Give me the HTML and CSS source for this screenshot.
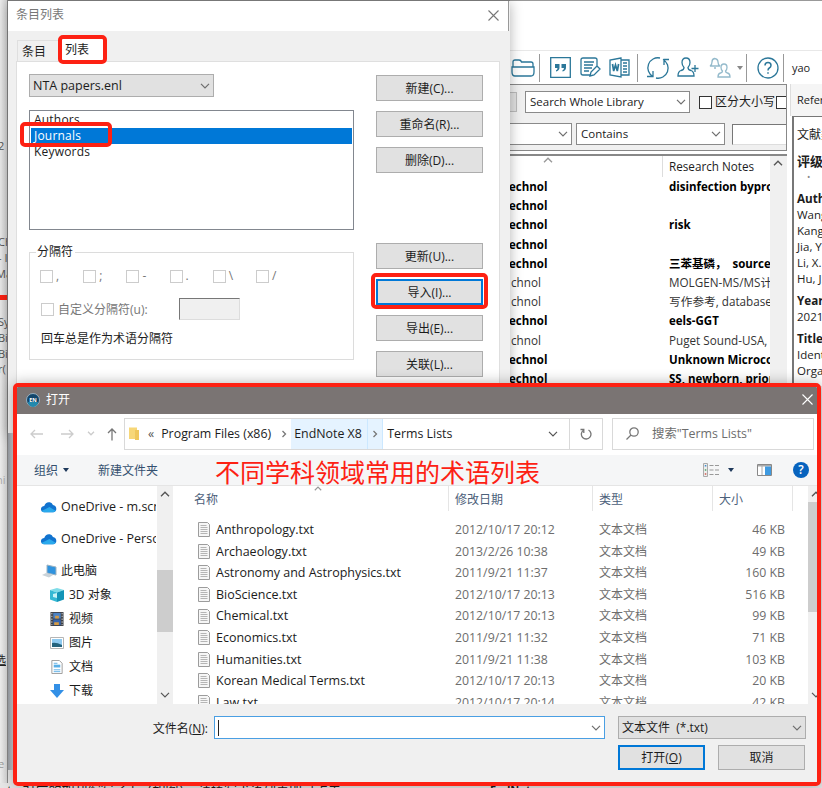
FILE: index.html
```html
<!DOCTYPE html>
<html lang="zh-CN">
<head>
    <meta charset="UTF-8">
    <meta name="viewport" content="width=device-width, initial-scale=1.0">
    <title>条目列表</title>
    <link rel="stylesheet" href="styles.css">
</head>
<body>
<svg class="defs" width="0" height="0">
    <symbol id="down" viewBox="0 0 10 6"><path d="M1 .8l4 4 4-4" fill="none" stroke="currentColor" stroke-width="1.2"/></symbol>
    <symbol id="up" viewBox="0 0 10 6"><path d="M1 5.2l4-4 4 4" fill="none" stroke="currentColor" stroke-width="1.4"/></symbol>
    <symbol id="close" viewBox="0 0 11 11"><path d="M.5.5l10 10M10.5.5l-10 10" fill="none" stroke="currentColor" stroke-width="1.1"/></symbol>
    <symbol id="cloud" viewBox="0 0 18 12">
        <path d="M1 8.5C1 6 3 5 4.500 5 5.300 1.800 8 .5 10.400 1.100c1.800.4 2.800 1.700 3.300 2.900C16 4.300 17.300 6 17.300 8c0 2-1.500 3.500-3.300 3.500H4C2.200 11.500 1 10.200 1 8.500z" fill="#1173cf"/>
        <path d="M1.600 10.300l8.400-4.200 6.600 4c-.6.900-1.600 1.400-2.600 1.400H4c-1 0-1.800-.4-2.400-1.200z" fill="#2aa9ec"/>
    </symbol>
    <symbol id="txt" viewBox="0 0 12 15">
        <path d="M.5.500h9l2 2v12H.5z" fill="#f6f6f6" stroke="#9c9c9c"/>
        <path d="M2.500 3.500h6M2.500 5.500h7M2.500 7.500h7M2.500 9.500h7M2.500 11.500h7" stroke="#b5b5b5"/>
    </symbol>
</svg>
<div class="desktop">
    <!-- document behind everything -->
    <div class="doc-strip">
        <span class="s1">2</span><span class="s2">Ch</span><span class="s3">- I</span><span class="s4">Ma</span>
        <i class="red-mark"></i>
        <span class="s5">Sy</span><span class="s6">Bi</span><span class="s7">Bi</span><span class="s8">r(</span>
        <span class="s9">ni</span><span class="s10">选</span><span class="s11">e</span>
    </div>
    <div class="doc-bottom"><span>ete 对应的期刊缩写了下（如图），请填写术语列表即可点击</span><b>EndNote</b></div>

    <!-- EndNote library -->
    <div class="library">
        <div class="lib-toolbar">
            <svg class="ic folder" viewBox="0 0 24 18"><path d="M2 8V3q0-2 2-2h4q2 0 2.500 2H20q2 0 2 2v3M1 8h22v5q0 4-3 4H4q-3 0-3-4z"/></svg>
            <i class="sep"></i>
            <svg class="ic quote" viewBox="0 0 21 21"><path d="M.7.700h19.600v19.600H.7z"/><path class="fill" d="M5 7h4.500v3.500q0 3-3.500 4v-1.200q1.500-.6 1.500-2.300H5zM11.500 7H16v3.500q0 3-3.500 4v-1.200q1.500-.6 1.500-2.300h-2.500z"/></svg>
            <svg class="ic note" viewBox="0 0 21 21"><path d="M17 9V3q0-2-2-2H3Q1 1 1 3v13q0 2 2 2h7M4 5h10M4 8h9M4 11h8M4 14h5M10 19l1-4 6-6 3 3-6 6z"/></svg>
            <svg class="ic word" viewBox="0 0 21 21"><path d="M12 1L1 3v15l11 2zM12 3h8v15h-8M14 6h4M14 9h4M14 12h4M14 15h4"/><path d="M3.500 7l1.200 7L6.500 8l1.800 6 1.300-7" stroke-width="1.700"/></svg>
            <i class="sep"></i>
            <svg class="ic sync" viewBox="0 0 24 24"><path d="M7 20.500A10 10 0 0 1 14 2M17 3.500A10 10 0 0 1 10 22M18 9V3.500h5M7 15v5.500H1"/></svg>
            <svg class="ic user" viewBox="0 0 22 21"><path d="M9 1q4 0 4 4.500 0 3-2 5 0 2.500 3 3 3 1 3 5.500H1q0-4.500 3-5.500 3-.5 3-3-2-2-2-5Q5 1 9 1zM18 8v7M14.500 11.500h7"/></svg>
            <svg class="ic bell" viewBox="0 0 22 21"><path d="M1 9q2-1 2-4 0-3 2.500-3.500Q9 2 9 5q0 3 2 4zM5 11h2M15 7q3 0 3 3.500 0 2-1.500 3.500 0 1.500 2 2 2.500.5 2.500 4H9q0-3.500 2.500-4 2-.5 2-2-1.500-1.500-1.500-3.500Q12 7 15 7z"/></svg>
            <i class="caret"></i>
            <i class="sep"></i>
            <svg class="ic help" viewBox="0 0 22 22"><circle cx="11" cy="11" r="10"/><path d="M8 8.500Q8 5.500 11 5.500t3 2.800Q14 10 12.300 11 11 11.800 11 13.500M11 15.200v1.600" stroke-width="1.500"/></svg>
            <i class="sep"></i>
            <span class="yao">yao</span>
        </div>
        <div class="lib-body">
            <div class="lib-main">
                <div class="search">
                    <div class="search-row">
                        <i class="stub"></i>
                        <div class="combo scope"><span>Search Whole Library</span><svg class="chev"><use href="#down"/></svg></div>
                        <i class="box dark"></i><span class="case">区分大小写</span><i class="box dark"></i>
                    </div>
                    <div class="search-row second">
                        <div class="combo field"><span></span><svg class="chev"><use href="#down"/></svg></div>
                        <div class="combo op"><span>Contains</span><svg class="chev"><use href="#down"/></svg></div>
                        <i class="term"></i>
                    </div>
                </div>
                <div class="refs">
                    <div class="ref-table">
                        <div class="ref-head"><span class="sort"><svg class="chev"><use href="#up"/></svg></span><span class="notes">Research Notes</span></div>
                        <div class="ref unread"><span>echnol</span><span>disinfection byproducts</span></div>
                        <div class="ref unread"><span>echnol</span><span></span></div>
                        <div class="ref unread"><span>echnol</span><span>risk</span></div>
                        <div class="ref unread"><span>echnol</span><span></span></div>
                        <div class="ref unread"><span>echnol</span><span>三苯基磷，&nbsp; source</span></div>
                        <div class="ref"><span>chnol</span><span>MOLGEN-MS/MS计算</span></div>
                        <div class="ref"><span>chnol</span><span>写作参考, database</span></div>
                        <div class="ref unread"><span>echnol</span><span>eels-GGT</span></div>
                        <div class="ref"><span>chnol</span><span>Puget Sound-USA,</span></div>
                        <div class="ref unread"><span>echnol</span><span>Unknown Microcontam</span></div>
                        <div class="ref unread"><span>echnol</span><span>SS, newborn, priority</span></div>
                    </div>
                    <div class="ref-scroll"><svg class="chev"><use href="#up"/></svg></div>
                </div>
            </div>
            <div class="detail">
                <div class="detail-tab">Reference</div>
                <div class="detail-body">
                    <p class="kind">文献类型</p>
                    <p class="rating">评级</p>
                    <p class="dot">•</p>
                    <h4>Author</h4>
                    <p>Wang,</p><p>Kang,</p><p>Jia, Y.</p><p>Li, X.</p><p>Hu, J.</p>
                    <h4>Year</h4>
                    <p>2021</p>
                    <h4>Title</h4>
                    <p>Identif</p><p>Organic</p>
                </div>
            </div>
        </div>
    </div>

    <!-- term lists window -->
    <div class="terms">
        <div class="terms-title"><span>条目列表</span><svg class="close"><use href="#close"/></svg></div>
        <div class="terms-body">
            <div class="tabs"><span class="tab">条目</span><span class="tab active">列表</span></div>
            <div class="page">
                <div class="page-left">
                    <div class="combo gray lib-name"><span>NTA papers.enl</span><svg class="chev"><use href="#down"/></svg></div>
                    <ul class="lists">
                        <li>Authors</li>
                        <li class="selected">Journals</li>
                        <li>Keywords</li>
                    </ul>
                    <fieldset class="delims">
                        <legend>分隔符</legend>
                        <div class="checks">
                            <label><i class="box"></i>,</label>
                            <label><i class="box"></i>;</label>
                            <label><i class="box"></i>-</label>
                            <label><i class="box"></i>.</label>
                            <label><i class="box"></i>\</label>
                            <label><i class="box"></i>/</label>
                        </div>
                        <div class="custom"><i class="box"></i><span>自定义分隔符(u):</span><i class="custom-input"></i></div>
                        <p>回车总是作为术语分隔符</p>
                    </fieldset>
                </div>
                <div class="page-right">
                    <button>新建(C)...</button>
                    <button>重命名(R)...</button>
                    <button>删除(D)...</button>
                    <button class="gap">更新(U)...</button>
                    <button class="focus">导入(I)...</button>
                    <button>导出(E)...</button>
                    <button>关联(L)...</button>
                </div>
            </div>
        </div>
    </div>
    <div class="back-edge"></div>

    <!-- open file dialog -->
    <div class="dialog">
        <div class="dlg-title">
            <svg class="logo" viewBox="0 0 14 14"><circle cx="7" cy="7" r="6.500" fill="#12466b" stroke="#a8c4d6" stroke-width=".8"/><path d="M2 9a5 5 0 0 0 10 0z" fill="#2389ad"/><text x="7" y="9" text-anchor="middle">EN</text></svg>
            <span>打开</span>
            <svg class="close"><use href="#close"/></svg>
        </div>
        <div class="nav">
            <svg class="arrow dim" viewBox="0 0 13 10"><path d="M5 1L1 5l4 4M1 5h12"/></svg>
            <svg class="arrow dim fwd" viewBox="0 0 13 10"><path d="M8 1l4 4-4 4M12 5H0"/></svg>
            <svg class="recent" viewBox="0 0 8 5"><path d="M1 .8l3 3 3-3"/></svg>
            <svg class="parent" viewBox="0 0 10 13"><path d="M1 5l4-4 4 4M5 1v11.500"/></svg>
            <div class="address">
                <svg class="dir" viewBox="0 0 10 13"><path d="M0 .5h8V12H0z"/><path d="M6 3h4v10H6z"/></svg>
                <span class="more">«</span>
                <span class="crumb pf">Program Files (x86)</span>
                <span class="to"><svg viewBox="0 0 6 8"><path d="M1.500 1l3 3-3 3"/></svg></span>
                <span class="crumb hot">EndNote X8</span>
                <span class="to hot"><svg viewBox="0 0 6 8"><path d="M1.500 1l3 3-3 3"/></svg></span>
                <span class="crumb last">Terms Lists</span>
                <svg class="chev drop"><use href="#down"/></svg>
                <span class="reload"><svg viewBox="0 0 12 12"><path d="M3.500 2.200A4.800 4.800 0 1 0 8.500 2M3.800 5V1.500H.5"/></svg></span>
            </div>
            <div class="find">
                <svg viewBox="0 0 13 13"><circle cx="8" cy="5" r="4.200"/><path d="M5 8L.5 12.500"/></svg>
                <span>搜索"Terms Lists"</span>
            </div>
        </div>
        <div class="cmdbar">
            <span>组织</span><i class="caret navy"></i><span class="newdir">新建文件夹</span>
            <svg class="view" viewBox="0 0 16 14"><path d="M.5.500h4v13h-4z" fill="#eee" stroke="#aaa"/><path d="M6.500 2.500h4M12 2.500h4M6.500 7h4M12 7h4M6.500 11.500h4M12 11.500h4" stroke="#999"/><path d="M1.800 2h1.500v1.500H1.800z" fill="#3b8ed0"/><path d="M1.800 6.200h1.500v1.500H1.800z" fill="#4aa564"/><path d="M1.800 10.300h1.500v1.500H1.800z" fill="#d05a4a"/></svg>
            <i class="caret navy v"></i>
            <svg class="preview" viewBox="0 0 15 12"><path d="M.5.500h14v11H.5z" fill="#fff" stroke="#888"/><path d="M1 1h13v1.500H1z" fill="#aaa"/><path d="M8 2.500h6V11H8z" fill="#3f9ae0"/><path d="M5 2v9" stroke="#aaa"/></svg>
            <span class="q">?</span>
        </div>
        <div class="files">
            <div class="side">
                <div class="place od"><svg class="cloud"><use href="#cloud"/></svg>OneDrive - m.scnu</div>
                <div class="place od"><svg class="cloud"><use href="#cloud"/></svg>OneDrive - Personal</div>
                <div class="place pc"><svg viewBox="0 0 16 14"><path d="M5 1l9 2v8l-9-2z" fill="#2f93df" stroke="#9fb4c2"/><path d="M0 11l4-2 7 2-4 2.500z" fill="#c9d2d8"/></svg>此电脑</div>
                <div class="place"><svg viewBox="0 0 14 14"><path d="M0 2l7-2 7 2-7 2.500z" fill="#7fdce8"/><path d="M0 2l7 2.500V14l-7-2.500z" fill="#35b9d4"/><path d="M14 2L7 4.500V14l7-2.500z" fill="#1295b8"/><path d="M3 6l4-1v5l-4-1z" fill="#c7f2f6"/></svg>3D 对象</div>
                <div class="place"><svg viewBox="0 0 14 15"><path d="M0 0h14v15H0z" fill="#3e4248"/><path d="M3 1h8v6H3z" fill="#4b83c6"/><path d="M3 8h8v6H3z" fill="#3566b0"/><path d="M5 4h4v3H5zM4 11h5v3H4z" fill="#d59b44"/><path d="M1.500 1v13M12.500 1v13" stroke="#ddd" stroke-dasharray="1.500 1.500"/></svg>视频</div>
                <div class="place"><svg viewBox="0 0 14 12"><path d="M.5.500h13v11H.5z" fill="#fff" stroke="#b5b5b5"/><path d="M2 2h10v8H2z" fill="#8fcaf0"/><path d="M2 6q4-1 10 2v2H2z" fill="#24627c"/></svg>图片</div>
                <div class="place"><svg viewBox="0 0 13 15"><path d="M1 .5h8l3 3v11H1z" fill="#fff" stroke="#999"/><path d="M3 5h7v3H3z" fill="#59aee5"/><path d="M3 10.500h7M3 12.500h7M3 3.500h4" stroke="#59aee5"/></svg>文档</div>
                <div class="place"><svg viewBox="0 0 14 14"><path d="M4 0h6v6h4l-7 8-7-8h4z" fill="#3390e6"/></svg>下载</div>
            </div>
            <div class="side-scroll"><svg class="chev"><use href="#up"/></svg><i class="thumb"></i><svg class="chev bottom"><use href="#down"/></svg></div>
            <div class="list">
                <div class="row head"><span>名称<svg class="chev"><use href="#up"/></svg></span><span>修改日期</span><span>类型</span><span>大小</span></div>
                <div class="row"><span><svg class="txt"><use href="#txt"/></svg>Anthropology.txt</span><span>2012/10/17 20:12</span><span>文本文档</span><span>46 KB</span></div>
                <div class="row"><span><svg class="txt"><use href="#txt"/></svg>Archaeology.txt</span><span>2013/2/26 10:38</span><span>文本文档</span><span>49 KB</span></div>
                <div class="row"><span><svg class="txt"><use href="#txt"/></svg>Astronomy and Astrophysics.txt</span><span>2011/9/21 11:37</span><span>文本文档</span><span>160 KB</span></div>
                <div class="row"><span><svg class="txt"><use href="#txt"/></svg>BioScience.txt</span><span>2012/10/17 20:13</span><span>文本文档</span><span>516 KB</span></div>
                <div class="row"><span><svg class="txt"><use href="#txt"/></svg>Chemical.txt</span><span>2012/10/17 20:13</span><span>文本文档</span><span>99 KB</span></div>
                <div class="row"><span><svg class="txt"><use href="#txt"/></svg>Economics.txt</span><span>2011/9/21 11:32</span><span>文本文档</span><span>71 KB</span></div>
                <div class="row"><span><svg class="txt"><use href="#txt"/></svg>Humanities.txt</span><span>2011/9/21 11:38</span><span>文本文档</span><span>103 KB</span></div>
                <div class="row"><span><svg class="txt"><use href="#txt"/></svg>Korean Medical Terms.txt</span><span>2012/10/17 20:13</span><span>文本文档</span><span>20 KB</span></div>
                <div class="row"><span><svg class="txt"><use href="#txt"/></svg>Law.txt</span><span>2012/10/17 20:14</span><span>文本文档</span><span>42 KB</span></div>
            </div>
            <div class="list-scroll"><svg class="chev"><use href="#up"/></svg><i class="thumb"></i><svg class="chev bottom"><use href="#down"/></svg></div>
        </div>
        <div class="dlg-foot">
            <label class="fname">文件名(<u>N</u>):</label>
            <div class="combo name-input"><span class="cursor"></span><svg class="chev"><use href="#down"/></svg></div>
            <div class="combo gray filter"><span>文本文件&nbsp; (*.txt)</span><svg class="chev"><use href="#down"/></svg></div>
            <div class="actions">
                <button class="focus">打开(<u>O</u>)</button>
                <button>取消</button>
            </div>
        </div>
    </div>

    <!-- red annotations -->
    <i class="mark mark-tab"></i>
    <i class="mark mark-journals"></i>
    <i class="mark mark-import"></i>
    <div class="mark-text">不同学科领域常用的术语列表</div>
</div>
</body>
</html>
```
FILE: styles.css
```css
:root {
    --red: #fd2113;
    --face: #f0f0f0;
    --blue: #0078d7;
    --teal: #2b7799;
}
* { box-sizing: border-box; }
body { margin: 0; font-family: "Open Sans", "Noto Sans CJK SC", sans-serif; font-size: 12px; line-height: 16px; color: #1c1c1c; }
p, h4, ul { margin: 0; padding: 0; list-style: none; }
i { display: block; flex: none; }
svg { display: block; flex: none; }
.defs { position: absolute; }
.desktop { position: relative; width: 822px; height: 788px; overflow: hidden; background: #e6e6e6; white-space: nowrap; }

.chev { width: 10px; height: 6px; color: #555; }
.close { width: 11px; height: 11px; color: #777; }
.box { width: 13px; height: 13px; border: 1px solid #ccc; background: #fff; }
.box.dark { border-color: #333; }
.combo { display: flex; flex: none; align-items: center; justify-content: space-between; background: #fff; border: 1px solid #8a8a8a; padding: 0 3px 0 4px; }
.combo.gray { background: #e1e1e1; border-color: #adadad; }
.combo .chev { color: #6e6e6e; }
button { width: 107px; height: 26px; padding: 1px 0 0; border: 1px solid #adadad; background: #e1e1e1; font: inherit; color: #1c1c1c; text-align: center; }
button.focus { border: 2px solid var(--blue); }
.caret { border: 3px solid transparent; border-top: 4px solid #888; border-bottom: 0; }
.caret.navy { border-top-color: #1e395b; }

/* document behind */
.doc-strip { position: absolute; left: 0; top: 0; width: 8px; height: 788px; overflow: hidden; background: linear-gradient(90deg, #ececec, #d4d4d4); border-right: 1px solid #888; font-size: 11px; color: #555; }
.doc-strip span { position: absolute; left: -2px; }
.doc-strip .s1 { top: 138px; }
.doc-strip .s2 { top: 234px; }
.doc-strip .s3 { top: 250px; }
.doc-strip .s4 { top: 266px; left: -4px; }
.doc-strip .s5 { top: 314px; }
.doc-strip .s6 { top: 330px; }
.doc-strip .s7 { top: 346px; }
.doc-strip .s8 { top: 361px; }
.doc-strip .s9 { top: 472px; left: -4px; color: #aaa; }
.doc-strip .s10 { top: 652px; left: -5px; text-decoration: underline; color: #222; }
.doc-strip .s11 { top: 756px; color: #999; }
.red-mark { position: absolute; left: 0; top: 295px; width: 8px; height: 5px; background: var(--red); }
.doc-bottom { position: absolute; left: 0; top: 783px; width: 822px; height: 5px; overflow: hidden; font-size: 13px; line-height: 14px; background: #e6e6e6; }
.doc-bottom b { position: absolute; left: 490px; font-size: 11px; }

/* library window */
.library { position: absolute; left: 508px; top: 0; width: 314px; height: 386px; border-top: 1px solid #999; background: #fff; overflow: hidden; }
.lib-toolbar { display: flex; align-items: center; height: 34px; margin-top: 49px; border-top: 1px solid #e8e8e8; padding-left: 3px; }
.ic { fill: none; stroke: var(--teal); stroke-width: 1.300; }
.ic .fill { fill: var(--teal); stroke: none; }
.folder { width: 24px; height: 18px; }
.sep { width: 1px; height: 28px; background: #999; }
.folder + .sep { margin-left: 4px; }
.quote { width: 21px; height: 21px; margin-left: 10px; }
.note { width: 21px; height: 21px; margin-left: 9px; }
.word { width: 21px; height: 21px; margin-left: 8px; }
.word + .sep { margin-left: 7px; }
.sync { width: 24px; height: 24px; margin-left: 8px; }
.user { width: 22px; height: 21px; margin-left: 7px; }
.bell { width: 22px; height: 21px; margin-left: 10px; opacity: .5; }
.bell + .caret { margin-left: 6px; }
.lib-toolbar .caret + .sep { margin-left: 3px; }
.help { width: 22px; height: 22px; margin-left: 10px; }
.help + .sep { margin-left: 4px; }
.yao { margin-left: 8px; font-size: 11px; }
.lib-body { display: flex; height: 302px; }
.lib-main { width: 279px; border-top: 1px solid #888; }
.search { height: 66px; background: var(--face); border-right: 1px solid #888; border-bottom: 1px solid #888; overflow: hidden; padding-top: 6px; font-size: 11.500px; }
.search-row { display: flex; align-items: center; height: 22px; }
.search-row.second { margin-top: 10px; }
.stub { width: 9px; height: 20px; border: 1px solid #bbb; background: #e1e1e1; }
.scope { width: 165px; height: 22px; margin: 0 9px 0 8px; }
.case { margin: 0 1px 0 3px; font-size: 12px; }
.field { width: 64px; height: 22px; }
.op { width: 149px; height: 22px; margin: 0 7px 0 4px; }
.term { width: 60px; height: 21px; background: #fff; border: 1px solid #777; border-right: 0; border-bottom: 1px solid #ddd; }
.refs { display: flex; height: 240px; margin-top: 3px; border-top: 2px solid #888; }
.ref-table { width: 262px; overflow: hidden; }
.ref-head { display: flex; height: 21px; }
.sort { width: 155px; padding: 1px 0 0 35px; border-right: 1px solid #ddd; }
.sort .chev { color: #999; }
.notes { padding: 2px 0 0 6px; font-size: 11.700px; }
.ref { display: flex; height: 19.200px; line-height: 19.200px; font-size: 11.700px; color: #333; }
.ref span:first-child { flex: none; width: 161px; padding-left: 3px; }
.ref.unread { font-weight: 700; font-size: 11.500px; color: #000; }
.ref.unread span:first-child { padding-left: 1px; }
.ref-scroll { width: 17px; background: var(--face); padding: 4px 3px; }
.detail { width: 32px; margin-left: 3px; }
.detail-tab { height: 32px; padding: 8px 0 0 6px; border-left: 1px solid #ddd; background: #f5f5f5; font-size: 11px; overflow: hidden; }
.detail-body { height: 290px; margin-left: 2px; border: 2px solid #777; border-width: 1px 0 0 2px; padding: 10px 0 0 3px; overflow: hidden; font-size: 11.500px; }
.kind { font-size: 12px; }
.rating { font-weight: 700; font-size: 13px; margin-top: 10px; }
.dot { color: #888; padding-left: 10px; font-size: 9px; }
.detail h4 { font-size: 11.700px; line-height: 16px; margin: 5px 0 1px; }

/* term lists window */
.terms { position: absolute; left: 8px; top: 0; width: 502px; height: 433px; border-top: 1px solid #777; background: var(--face); box-shadow: 0 3px 12px rgba(0,0,0,0.3); }
.terms-title { display: flex; align-items: center; justify-content: space-between; width: 501px; height: 30px; padding: 0 9px 2px 8px; background: #fff; color: #777; border-right: 1px solid #999; }
.terms-body { padding: 7px 10px 0 8px; }
.tabs { display: flex; align-items: flex-end; height: 23px; padding-left: 1px; }
.tab { width: 42px; height: 21px; padding: 3px 0 0 4px; border: 1px solid #dfdfdf; border-bottom: 0; }
.tab.active { width: 46px; height: 23px; padding-left: 5px; background: #fff; }
.page { display: flex; justify-content: space-between; height: 372px; padding: 13px 16px 0 12px; background: #fff; border: 1px solid #dfdfdf; }
.lib-name { width: 185px; height: 23px; font-size: 12.500px; padding-left: 3px; margin-top: -1px; }
.lists { width: 325px; height: 120px; margin-top: 13px; padding: 1px; border: 1px solid #82878f; background: #fff; letter-spacing: .2px; }
.lists li { height: 16px; padding-left: 3px; }
.lists .selected { background: var(--blue); color: #fff; }
.delims { position: relative; width: 325px; height: 116px; margin: 14px 0 0; padding: 8px 9px 0 10px; border: 1px solid #dcdcdc; min-width: 0; }
.delims legend { margin-left: -4px; padding: 0 2px 0 1px; }
.checks { display: flex; }
.checks label { display: flex; align-items: center; gap: 3px; width: 43.200px; color: #777; }
.custom { display: flex; align-items: center; height: 22px; margin-top: 14px; padding-left: 1px; color: #777; }
.custom .box { margin-right: 4px; }
.custom span { width: 121px; padding-top: 2px; }
.custom-input { width: 61px; height: 22px; background: var(--face); border: 1px solid #ddd; border-top-color: #777; border-left-color: #777; }
.delims p { margin-top: 11px; padding-left: 1px; }
.page-right { display: flex; flex-direction: column; gap: 10px; }
.page-right .gap { margin-top: 60px; }
.back-edge { position: absolute; left: 8px; top: 433px; width: 6px; height: 337px; background: linear-gradient(90deg, #9a9fa6, #d5d8dc); }

/* open dialog */
.dialog { position: absolute; left: 13px; top: 383px; width: 808px; height: 403px; border: 4px solid var(--red); border-radius: 5px; background: #fff; overflow: hidden; box-shadow: 0 0 14px rgba(0,0,0,0.3); }
.dlg-title { display: flex; align-items: center; height: 27px; padding: 0 4px 2px 9px; background: #7a7473; color: #fff; }
.dlg-title span { flex: 1; margin-left: 6px; }
.dlg-title .close { color: #fff; }
.logo { width: 14px; height: 14px; }
.logo text { font-size: 5.500px; font-weight: 700; fill: #fff; }
.nav { display: flex; align-items: center; height: 41px; padding: 0 3px 2px 13px; font-size: 12.400px; }
.nav path, .nav circle { fill: none; stroke: #777; stroke-width: 1.300; }
.nav .dir path { stroke: none; }
.nav .dir path:first-child { fill: #f7d778; }
.nav .dir path:last-child { fill: #efc75c; }
.arrow { width: 13px; height: 10px; }
.nav .arrow.dim path, .nav .recent path { stroke: #ccc; }
.fwd { margin-left: 18px; }
.recent { width: 8px; height: 5px; margin-left: 13px; }
.parent { width: 10px; height: 13px; margin: 2px 0 0 12px; }
.address { display: flex; align-items: center; width: 479px; height: 32px; margin-left: 7px; border: 1px solid #d9d9d9; padding-left: 4px; }
.dir { width: 10px; height: 13px; }
.more { margin-left: 9px; color: #555; }
.crumb { height: 30px; line-height: 30px; overflow: hidden; }
.pf { width: 115px; margin-left: 7px; }
.to { display: flex; align-items: center; justify-content: center; width: 15px; height: 30px; }
.to svg { width: 6px; height: 8px; }
.crumb.hot { width: 77px; padding-left: 3px; background: #e5f3ff; border-right: 1px solid #cce8ff; }
.to.hot { background: #e5f3ff; border-right: 1px solid #cce8ff; }
.last { padding-left: 4px; flex: 1; }
.drop { margin-right: 11px; }
.reload { display: flex; align-items: center; justify-content: center; width: 33px; height: 30px; border-left: 1px solid #d9d9d9; }
.reload svg { width: 12px; height: 12px; }
.find { display: flex; align-items: center; width: 202px; height: 32px; margin-left: 9px; border: 1px solid #d9d9d9; padding-left: 13px; color: #6d6d6d; }
.find svg { width: 13px; height: 13px; margin-right: 13px; }
.cmdbar { display: flex; align-items: center; height: 31px; padding: 0 8px 0 17px; background: #f5f6f7; border-bottom: 1px solid #e5e5e5; color: #34506f; }
.cmdbar span { padding-top: 1px; }
.cmdbar .caret { margin-left: 5px; }
.newdir { flex: 1; margin-left: 29px; }
.view { width: 16px; height: 14px; }
.cmdbar .caret.v { margin: 0 23px 0 9px; }
.preview { width: 15px; height: 12px; margin-right: 21px; }
.cmdbar .q { width: 16px; height: 16px; padding: 0; border-radius: 50%; background: #0763be; color: #fff; font-weight: 600; text-align: center; line-height: 16px; }
.files { display: flex; height: 218px; overflow: hidden; }
.side { flex: none; width: 140px; padding: 4px 1px 0 0; overflow: hidden; }
.place { display: flex; align-items: center; height: 24px; padding: 1px 0 0 33px; font-size: 12px; overflow: hidden; }
.place svg { width: 14px; height: 14px; margin-right: 5px; }
.place.od { height: 32px; padding-left: 23px; font-size: 12.500px; }
.place .cloud { width: 17px; height: 12px; margin-right: 4px; }
.place.pc { height: 32px; padding-left: 25px; }
.place.pc svg { width: 16px; margin-right: 3px; }
.place.pc + .place { margin-top: -4px; }
.side-scroll, .list-scroll { display: flex; flex: none; flex-direction: column; width: 16px; padding: 5px 3px 6px; background: var(--face); }
.side-scroll .thumb { width: 16px; height: 62px; margin: 73px 0 auto -3px; background: #cdcdcd; }
.list-scroll { width: 9px; overflow: hidden; }
.list-scroll .thumb { width: 16px; height: 110px; margin: 5px 0 auto -3px; background: #cdcdcd; }
.list { flex: none; width: 635px; overflow: hidden; padding-left: 16px; }
.row { display: grid; grid-template-columns: 260px 144px 120px 72px; height: 21.600px; line-height: 21.600px; }
.row span { display: flex; align-items: center; padding-left: 6px; color: #6d6d6d; font-size: 12.300px; }
.row span:first-child { color: #1c1c1c; font-size: 12.500px; padding-left: 9px; }
.row span:nth-child(3) { font-size: 12px; }
.row span:last-child { justify-content: flex-end; }
.row .txt { width: 12px; height: 15px; margin: 0 6px 0 0; }
.row.head { grid-template-columns: 260px 144px 120px 80px; height: 25px; margin-bottom: 8px; }
.row.head span, .row.head span:first-child { position: relative; justify-content: flex-start; padding-top: 2px; font-size: 12px; color: #4c607a; border-right: 1px solid #e5e5e5; }
.row.head span:first-child { padding-left: 5px; }
.row.head .chev { position: absolute; left: 125px; top: 0; width: 8px; height: 5px; color: #999; }
.dlg-foot { display: grid; grid-template-columns: 191px 391px 188px; column-gap: 6px; row-gap: 6px; align-content: start; height: 78px; padding-top: 12px; background: var(--face); }
.fname { text-align: right; line-height: 25px; height: 23px; }
.name-input { height: 23px; border-color: #4a9fe3; }
.cursor { width: 1px; height: 16px; margin-left: -1px; background: #222; }
.filter { height: 23px; margin-left: 7px; width: 188px; padding-left: 3px; }
.filter span { padding-top: 1px; }
.dlg-foot .actions { grid-column: 3; display: flex; justify-content: space-between; margin-left: 7px; width: 187px; }
.dlg-foot button { width: 87px; height: 25px; }

/* annotations */
.mark { position: absolute; border: 4px solid var(--red); border-radius: 5px; }
.mark-tab { left: 58px; top: 35px; width: 49px; height: 29px; }
.mark-journals { left: 20px; top: 122px; width: 92px; height: 25px; }
.mark-import { left: 371px; top: 273px; width: 117px; height: 36px; }
.mark-text { position: absolute; left: 215px; top: 457px; font-size: 25px; line-height: 30px; color: var(--red); }
```
